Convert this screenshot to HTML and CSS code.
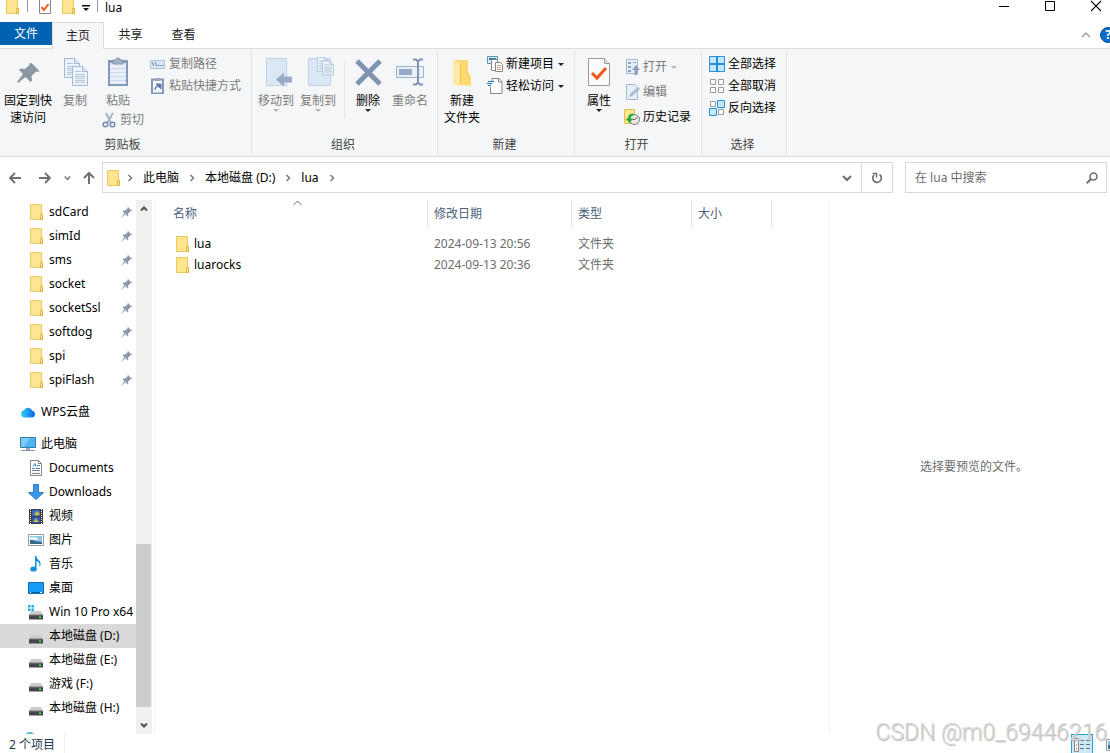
FILE: index.html
```
<!DOCTYPE html>
<html lang="zh-CN">
<head>
  <meta charset="UTF-8" />
  <meta name="viewport" content="width=device-width, initial-scale=1.0"/>
  <title>lua</title>
  <link rel="stylesheet" href="styles.css">
</head>
<body>
  <!-- Shared icons -->
  <svg class="sprite" width="0" height="0" aria-hidden="true">
    <symbol id="folder" viewBox="0 0 14 16">
      <path d="M1.500.5h11v10h1v5h-12z" fill="#ffe592" stroke="#edc85a"/>
      <path d="M11.500 10.500v5h2v-5z" fill="#ffe592" stroke="#e3b63e"/>
    </symbol>
    <symbol id="pin" viewBox="0 0 12 12">
      <path d="M7 1l4 4-1 .6-.8-.2-2 2 .1 2.100-.8.8-2-2L.8 11.300.5 11l3-3.800-2-2 .8-.8 2.200.2 2-2-.1-.900z" fill="#8b9aa7"/>
    </symbol>
    <symbol id="chev-right" viewBox="0 0 6 8">
      <path d="M1.500 1l3 3-3 3" fill="none" stroke="#7a7a7a" stroke-width="1.500"/>
    </symbol>
    <symbol id="chev-down" viewBox="0 0 10 8">
      <path d="M1 2l4 4 4-4" fill="none" stroke="currentColor" stroke-width="2"/>
    </symbol>
    <symbol id="check-doc" viewBox="0 0 22 28">
      <path d="M.5.5h16l5 5v22H.5z" fill="#fbfbfb" stroke="#999"/>
      <path d="M16.500.5v5h5" fill="#e8e8e8" stroke="#999"/>
      <path d="M4 15l5 5 9-10" fill="none" stroke="#f05a1a" stroke-width="3"/>
    </symbol>
    <symbol id="page" viewBox="0 0 16 20">
      <path d="M.5.5h10l5 5v14H.5z" fill="#edf3fb" stroke="#a5b7d2"/>
      <path d="M10.500.5v5h5" fill="#dbe6f5" stroke="#a5b7d2"/>
      <path d="M3 5.500h6M3 8.500h10M3 10.500h10M3 12.500h10M3 14.500h10M3 16.500h10" stroke="#b4c4db"/>
    </symbol>
    <symbol id="drive" viewBox="0 0 14 9">
      <path d="M2 0h10l2 4H0z" fill="#c9cbcd"/>
      <path d="M0 4h14v4.500H0z" fill="#44484b"/>
      <path d="M0 4h14" stroke="#777" />
      <path d="M10 5.500h2v1.500h-2z" fill="#4cf04c"/>
    </symbol>
  </svg>

  <div class="window">
    <!-- Title bar -->
    <header class="titlebar">
      <svg class="title-folder" width="14" height="14" viewBox="0 2 14 14"><use href="#folder" width="14" height="16"/></svg>
      <span class="title-sep"></span>
      <button class="plain" aria-label="属性">
        <svg width="12" height="14" viewBox="0 2 12 14"><path d="M.5.5h11v15H.5z" fill="#fff" stroke="#888"/><path d="M2.500 9l2.500 3 4.500-6" fill="none" stroke="#f05a1a" stroke-width="2"/></svg>
      </button>
      <button class="plain" aria-label="新建文件夹">
        <svg width="14" height="14" viewBox="0 2 14 14"><use href="#folder" width="14" height="16"/></svg>
      </button>
      <button class="plain title-more" aria-label="自定义快速访问工具栏">
        <svg width="8" height="12" viewBox="0 0 8 12"><path d="M0 5h8v1.500H0zM1 8h6L4 11z" fill="#111"/></svg>
      </button>
      <span class="title-sep"></span>
      <span class="title-text">lua</span>
      <div class="window-controls">
        <button class="plain" aria-label="最小化"><svg width="10" height="12" viewBox="0 0 10 12"><path d="M0 6.500h10" stroke="#000"/></svg></button>
        <button class="plain" aria-label="最大化"><svg width="10" height="12" viewBox="0 0 10 12"><path d="M.5 1.500h9v9h-9z" fill="none" stroke="#000"/></svg></button>
        <button class="plain" aria-label="关闭"><svg width="10" height="12" viewBox="0 0 10 12"><path d="M0 1l10 10M10 1L0 11" stroke="#000" stroke-width="1.200"/></svg></button>
      </div>
    </header>

    <!-- Ribbon tabs -->
    <nav class="tabs">
      <button class="tab tab-file">文件</button>
      <button class="tab tab-active">主页</button>
      <button class="tab">共享</button>
      <button class="tab">查看</button>
      <div class="tab-tools">
        <button class="plain" aria-label="最小化功能区"><svg width="10" height="8" viewBox="0 0 10 8"><path d="M1 6l4-4 4 4" fill="none" stroke="#a3a3a3" stroke-width="1.500"/></svg></button>
        <button class="plain help" aria-label="帮助">?</button>
      </div>
    </nav>

    <!-- Ribbon -->
    <div class="ribbon">
      <section class="group group-clipboard">
        <div class="group-body">
          <button class="big big-pin">
            <svg width="32" height="32" viewBox="0 0 32 32"><path d="M20.500 6l8 8-2 1-1.500-.5-4.500 4.500.5 4.500-1.500 1.500-5-5L7 26l-1-1 6-8-4-4 1.500-1.500 4.500.5L18.500 8l-.5-1.500z" transform="translate(-1 0)" fill="#8b98a3"/></svg>
            <span>固定到快<br>速访问</span>
          </button>
          <button class="big big-copy muted">
            <svg width="32" height="32" viewBox="0 0 32 32"><use href="#page" x="5" y="1" width="16" height="20"/><use href="#page" x="13" y="9" width="16" height="20"/></svg>
            <span>复制</span>
          </button>
          <div class="paste-column">
            <button class="big muted">
              <svg width="32" height="32" viewBox="0 0 32 32"><path d="M6 3h20v26H6z" fill="#8498ba"/><path d="M8 6h16v21H8z" fill="#e8effa"/><path d="M8 11.500h16M8 15.500h16M8 19.500h16M8 23.500h16" stroke="#cbd8ea"/><path d="M11 3h3a2 2 0 0 1 4 0h3v4H11z" fill="#a6b4c9" stroke="#8292ab"/></svg>
              <span>粘贴</span>
            </button>
            <button class="small muted">
              <svg width="16" height="16" viewBox="0 0 16 16"><path d="M5 1l5 10M12 1L6 11" stroke="#a6b4c8" stroke-width="2"/><circle cx="4.500" cy="12.500" r="2.300" fill="none" stroke="#7288b3" stroke-width="1.500"/><circle cx="11.500" cy="12.500" r="2.300" fill="none" stroke="#7288b3" stroke-width="1.500"/></svg>
              剪切
            </button>
          </div>
          <div class="stack">
            <button class="small muted">
              <svg width="16" height="16" viewBox="0 0 16 16"><path d="M.5 4.500h14v8H.5z" fill="#dde7f4" stroke="#b0c0d8"/><path d="M2 6l2 4M5 6l2 4M8 9.500h1.500M10.500 9.500h1.500M12.500 9.500h1" stroke="#687d9e"/></svg>
              复制路径
            </button>
            <button class="small muted">
              <svg width="16" height="16" viewBox="0 0 16 16"><path d="M2 1.500h11v14H2z" fill="#f3f7fc" stroke="#8498ba" stroke-width="2"/><path d="M5 0h5v3H5z" fill="#9cabc3"/><path d="M5 12c0-3 1-4 3-4M6 6h5v5z" fill="#5a77ab" stroke="#5a77ab"/></svg>
              粘贴快捷方式
            </button>
          </div>
        </div>
        <div class="group-label">剪贴板</div>
      </section>

      <section class="group">
        <div class="group-body">
          <button class="big muted">
            <svg width="32" height="32" viewBox="0 0 32 32"><path d="M6.500 1.500h20v27h-20z" fill="#dce7f5" stroke="#c2d1e6"/><path d="M16 22.500l8-7v4h8v6h-8v4z" fill="#97a9c6"/></svg>
            <span>移动到</span>
            <i class="caret"></i>
          </button>
          <button class="big muted">
            <svg width="32" height="32" viewBox="0 0 32 32"><path d="M6.500 1.500h22v27h-22z" fill="#dce7f5" stroke="#c2d1e6"/><use href="#page" x="15" y="0" width="12" height="15"/><use href="#page" x="20" y="3" width="12" height="16"/></svg>
            <span>复制到</span>
            <i class="caret"></i>
          </button>
          <span class="divider"></span>
          <button class="big">
            <svg width="32" height="32" viewBox="0 0 32 32"><path d="M5 4l23 23M28 4L5 27" stroke="#7f93b3" stroke-width="5"/></svg>
            <span>删除</span>
            <i class="caret"></i>
          </button>
          <button class="big muted">
            <svg width="32" height="32" viewBox="0 0 32 32"><path d="M2.500 9.500h27v11h-27z" fill="#e9f0fa" stroke="#9fb1cc"/><path d="M5 12h13v6H5z" fill="#94a8c7"/><path d="M24 4v22M19 2.500h3l2 2 2-2h3M19 27.500h3l2-2 2 2h3" fill="none" stroke="#8095b6" stroke-width="2"/></svg>
            <span>重命名</span>
          </button>
        </div>
        <div class="group-label">组织</div>
      </section>

      <section class="group">
        <div class="group-body">
          <button class="big">
            <svg width="32" height="32" viewBox="0 0 32 32"><path d="M7 3h15v13l3 3v10l-18-2z" fill="#ffd972"/><path d="M7 3l7 3v24l-7-3z" fill="#ffe9a6"/><path d="M14.500 6v22M20 14l3 4" stroke="#f2c550"/></svg>
            <span>新建<br>文件夹</span>
          </button>
          <div class="stack">
            <button class="small">
              <svg width="16" height="16" viewBox="0 0 16 16"><path d="M.5.500h10v7H.5z" fill="#d7edf8" stroke="#5f93ad"/><path d="M2 3h7" stroke="#28779c" stroke-width="2"/><path d="M4.500 3.500h6v11h-6z" fill="#fff" stroke="#888"/><path d="M8.500 6.500h5l2 2v7h-7z" fill="#fff" stroke="#888"/><path d="M10 9.500h4M10 11.500h4M10 13.500h4" stroke="#d99a8a"/></svg>
              新建项目
              <i class="caret"></i>
            </button>
            <button class="small">
              <svg width="16" height="16" viewBox="0 0 16 16"><path d="M5 3.500V.5h7l3 3v12H3.500V9" fill="#fff" stroke="#858585"/><path d="M11.500.5v3.500h3.500" fill="none" stroke="#858585"/><path d="M1 3.500h6M0 5.500h5M1 7.500h3" stroke="#2175ad"/></svg>
              轻松访问
              <i class="caret"></i>
            </button>
          </div>
        </div>
        <div class="group-label">新建</div>
      </section>

      <section class="group">
        <div class="group-body">
          <button class="big">
            <svg width="32" height="32" viewBox="0 0 32 32"><use href="#check-doc" x="5" y="1" width="22" height="28"/></svg>
            <span>属性</span>
            <i class="caret"></i>
          </button>
          <div class="stack stack-loose">
            <button class="small muted">
              <svg width="16" height="16" viewBox="0 0 16 16"><path d="M2.500.5h11v14h-11z" fill="#e6eef8" stroke="#a5b7d2"/><path d="M4 3h3v2H4zM4 7h3v2H4zM4 11h3v2H4zM9 3h3v1H9z" fill="#8ba1c4"/><path d="M12 6l4 5h-2.500v5h-3v-5H8z" fill="#8ba1c4"/></svg>
              打开
              <i class="caret"></i>
            </button>
            <button class="small muted">
              <svg width="16" height="16" viewBox="0 0 16 16"><path d="M2.500.5h8l3 3v12h-11z" fill="#e6eef8" stroke="#a5b7d2"/><path d="M5 13l1-3 8-7 2 2-8 7z" fill="#a7b8d1"/></svg>
              编辑
            </button>
            <button class="small">
              <svg width="16" height="16" viewBox="0 0 16 16"><path d="M.5.5h10v14H.5z" fill="#ffe794" stroke="#e3bd4e"/><circle cx="10.500" cy="10.500" r="5" fill="#e6e6e6" stroke="#777"/><path d="M10.500 10.500l3-2M10.500 10.500h-2" fill="none" stroke="#555"/><path d="M9.500 4.500c-4 0-5.500 2-5.500 5H1.500l4 4.500 3.500-4.500H6.500c0-2 1-3 3-3z" fill="#2da92d"/></svg>
              历史记录
            </button>
          </div>
        </div>
        <div class="group-label">打开</div>
      </section>

      <section class="group">
        <div class="group-body">
          <div class="stack">
            <button class="small">
              <svg width="16" height="16" viewBox="0 0 16 16"><path d="M.5.5h15v15H.5z" fill="#c5e6fb" stroke="#2690e0"/><path d="M8 0v16M0 8h16" stroke="#2690e0" stroke-width="2"/></svg>
              全部选择
            </button>
            <button class="small">
              <svg width="16" height="16" viewBox="0 0 16 16"><path d="M1.500 1.500h5v5h-5zM9.500 1.500h5v5h-5zM1.500 9.500h5v5h-5zM9.500 9.500h5v5h-5z" fill="#fff" stroke="#9b9b9b"/></svg>
              全部取消
            </button>
            <button class="small">
              <svg width="16" height="16" viewBox="0 0 16 16"><path d="M1.500 1.500h5v5h-5zM9.500 9.500h5v5h-5z" fill="#fff" stroke="#9b9b9b"/><path d="M8.500.5h7v7h-7zM.5 8.500h7v7h-7z" fill="#c5e6fb" stroke="#2690e0"/></svg>
              反向选择
            </button>
          </div>
        </div>
        <div class="group-label">选择</div>
      </section>
    </div>

    <!-- Address bar -->
    <div class="location">
      <div class="history">
        <button class="plain back" aria-label="返回"><svg width="14" height="12" viewBox="0 0 14 12"><path d="M13 6H2M7 1L2 6l5 5" fill="none" stroke="#6f6f6f" stroke-width="1.800"/></svg></button>
        <button class="plain" aria-label="前进"><svg width="14" height="12" viewBox="0 0 14 12"><path d="M1 6h11M7 1l5 5-5 5" fill="none" stroke="#6f6f6f" stroke-width="1.800"/></svg></button>
        <button class="plain" aria-label="最近浏览的位置"><svg width="7" height="6"><use href="#chev-down"/></svg></button>
        <button class="plain" aria-label="上移"><svg width="12" height="14" viewBox="0 0 12 14"><path d="M6 13V2M1 7l5-5 5 5" fill="none" stroke="#6f6f6f" stroke-width="2"/></svg></button>
      </div>
      <div class="address">
        <svg class="address-icon" width="14" height="16"><use href="#folder"/></svg>
        <svg class="crumb-sep" width="6" height="8"><use href="#chev-right"/></svg>
        <a href="#">此电脑</a>
        <svg class="crumb-sep" width="6" height="8"><use href="#chev-right"/></svg>
        <a href="#">本地磁盘 (D:)</a>
        <svg class="crumb-sep" width="6" height="8"><use href="#chev-right"/></svg>
        <a href="#">lua</a>
        <svg class="crumb-sep" width="6" height="8"><use href="#chev-right"/></svg>
        <button class="plain address-drop" aria-label="以前的位置"><svg width="10" height="8"><use href="#chev-down"/></svg></button>
        <button class="plain refresh" aria-label="刷新"><svg width="12" height="12" viewBox="0 0 12 12"><path d="M8.500 2.500A4.300 4.300 0 1 1 3 3" fill="none" stroke="#6f6f6f" stroke-width="1.700"/><path d="M1.500 1.500h4v4" fill="none" stroke="#6f6f6f" stroke-width="1.500"/></svg></button>
      </div>
      <div class="search">
        <input type="text" placeholder="在 lua 中搜索" aria-label="在 lua 中搜索">
        <svg width="12" height="12" viewBox="0 0 12 12"><circle cx="7.500" cy="4.500" r="3.500" fill="none" stroke="#6f6f6f" stroke-width="1.600"/><path d="M5 7L.8 11.200" stroke="#6f6f6f" stroke-width="2"/></svg>
      </div>
    </div>

    <div class="content">
      <!-- Navigation tree -->
      <aside class="sidebar">
        <nav class="tree">
          <a class="node child" href="#"><svg width="16" height="16"><use href="#folder"/></svg>sdCard<svg class="pin" width="12" height="12"><use href="#pin"/></svg></a>
          <a class="node child" href="#"><svg width="16" height="16"><use href="#folder"/></svg>simId<svg class="pin" width="12" height="12"><use href="#pin"/></svg></a>
          <a class="node child" href="#"><svg width="16" height="16"><use href="#folder"/></svg>sms<svg class="pin" width="12" height="12"><use href="#pin"/></svg></a>
          <a class="node child" href="#"><svg width="16" height="16"><use href="#folder"/></svg>socket<svg class="pin" width="12" height="12"><use href="#pin"/></svg></a>
          <a class="node child" href="#"><svg width="16" height="16"><use href="#folder"/></svg>socketSsl<svg class="pin" width="12" height="12"><use href="#pin"/></svg></a>
          <a class="node child" href="#"><svg width="16" height="16"><use href="#folder"/></svg>softdog<svg class="pin" width="12" height="12"><use href="#pin"/></svg></a>
          <a class="node child" href="#"><svg width="16" height="16"><use href="#folder"/></svg>spi<svg class="pin" width="12" height="12"><use href="#pin"/></svg></a>
          <a class="node child" href="#"><svg width="16" height="16"><use href="#folder"/></svg>spiFlash<svg class="pin" width="12" height="12"><use href="#pin"/></svg></a>

          <a class="node root" href="#">
            <svg width="16" height="16" viewBox="0 0 16 16">
              <defs><linearGradient id="cloud"><stop offset="0" stop-color="#2fd5e8"/><stop offset="1" stop-color="#0a5ff0"/></linearGradient></defs>
              <path d="M4.500 13.500a3.700 3.700 0 0 1-.5-7.300 4.500 4.500 0 0 1 8.300.6 3.400 3.400 0 0 1-.3 6.700z" fill="url(#cloud)"/>
            </svg>
            WPS云盘
          </a>

          <a class="node root" href="#">
            <svg width="16" height="16" viewBox="0 0 16 16"><path d="M.5 1.500h15v10H.5z" fill="#4db4f2" stroke="#3b7ba3"/><path d="M1 2h9L4 11H1z" fill="#79cbf8"/><path d="M6 12h4v2H6z" fill="#9ab"/><path d="M1 14.500h14" stroke="#8296a6"/></svg>
            此电脑
          </a>
          <a class="node child" href="#">
            <svg width="16" height="16" viewBox="0 0 16 16"><path d="M2.500.5h8l3 3v12h-11z" fill="#fff" stroke="#888"/><path d="M10.500.5v3h3" fill="none" stroke="#888"/><path d="M4 8.500h3M4 10.500h8M4 13.500h8M9 5.500h3" stroke="#6b8596"/><path d="M5 6.500l2-3 1 3M8 8.500h4" fill="none" stroke="#1687cf"/></svg>
            Documents
          </a>
          <a class="node child" href="#">
            <svg width="16" height="16" viewBox="0 0 16 16"><path d="M5.500.5h5v8h5L8 15.500.5 8.500h5z" fill="#3a97e8" stroke="#2b7fcd"/></svg>
            Downloads
          </a>
          <a class="node child" href="#">
            <svg width="16" height="16" viewBox="0 0 16 16"><path d="M1 1h14v15H1z" fill="#3c3c3c"/><path d="M4 2h8v6H4z" fill="#3969c6"/><path d="M4 9h8v6H4z" fill="#2b58b8"/><path d="M6 6l3-3 3 3-3 2zM5 14l3-4 3 4z" fill="#d4b33a"/><path d="M2.500 1v15M13.500 1v15" stroke="#fff" stroke-dasharray="1 1"/></svg>
            视频
          </a>
          <a class="node child" href="#">
            <svg width="16" height="16" viewBox="0 0 16 16"><path d="M.5 2.500h15v11H.5z" fill="#fff" stroke="#999"/><path d="M2 4h12v8H2z" fill="#8cc7f0"/><path d="M2 7l5 2 7 1v2H2z" fill="#37688b"/><path d="M2 5h6l3 3H2z" fill="#e4f3fb"/></svg>
            图片
          </a>
          <a class="node child" href="#">
            <svg width="16" height="16" viewBox="0 0 16 16"><ellipse cx="5.500" cy="13" rx="3.300" ry="2.600" fill="#1690e0"/><path d="M7 0h1.500c0 4 5 4 4 9-1 2 0 1-1 2 .5-4-1-5-3-6v8H7z" fill="#1690e0"/></svg>
            音乐
          </a>
          <a class="node child" href="#">
            <svg width="16" height="16" viewBox="0 0 16 16"><path d="M.5 2.500h15v11H.5z" fill="#159df5" stroke="#0c6fb5"/><path d="M1 12.500h14" stroke="#075f9d"/><path d="M2 12.500h1M12 12.500h2" stroke="#fff"/></svg>
            桌面
          </a>
          <a class="node child" href="#">
            <svg width="16" height="16" viewBox="0 0 16 16"><path d="M0 1h2.500v2.500H0zM3.500 1H6v2.500H3.500zM0 4.500h2.500V7H0zM3.500 4.500H6V7H3.500z" fill="#13b4ec"/><use href="#drive" x="1" y="7" width="14" height="9"/></svg>
            Win 10 Pro x64
          </a>
          <a class="node child selected" href="#"><svg width="16" height="16" viewBox="0 0 16 16"><use href="#drive" x="1" y="7" width="14" height="9"/></svg>本地磁盘 (D:)</a>
          <a class="node child" href="#"><svg width="16" height="16" viewBox="0 0 16 16"><use href="#drive" x="1" y="7" width="14" height="9"/></svg>本地磁盘 (E:)</a>
          <a class="node child" href="#"><svg width="16" height="16" viewBox="0 0 16 16"><use href="#drive" x="1" y="7" width="14" height="9"/></svg>游戏 (F:)</a>
          <a class="node child" href="#"><svg width="16" height="16" viewBox="0 0 16 16"><use href="#drive" x="1" y="7" width="14" height="9"/></svg>本地磁盘 (H:)</a>
          <a class="node root" href="#" aria-label="网络">
            <svg width="16" height="16" viewBox="0 0 16 16"><circle cx="10" cy="5" r="5" fill="#5fb0cf"/></svg>
          </a>
        </nav>
        <div class="scrollbar">
          <button class="plain scroll-btn" aria-label="向上滚动"><svg width="8" height="7" viewBox="0 0 8 7"><path d="M1 5.500l3-3 3 3" fill="none" stroke="#505050" stroke-width="2"/></svg></button>
          <div class="scroll-before"></div>
          <div class="scroll-thumb"></div>
          <div class="scroll-after"></div>
          <button class="plain scroll-btn" aria-label="向下滚动"><svg width="8" height="7" viewBox="0 0 8 7"><path d="M1 1.500l3 3 3-3" fill="none" stroke="#505050" stroke-width="2"/></svg></button>
        </div>
      </aside>

      <!-- File list -->
      <main class="files">
        <table>
          <thead>
            <tr>
              <th class="col-name">名称<svg class="sort" width="9" height="6" viewBox="0 0 9 6"><path d="M.5 5l4-4 4 4" fill="none" stroke="#666"/></svg></th>
              <th class="col-date">修改日期</th>
              <th class="col-type">类型</th>
              <th class="col-size">大小</th>
            </tr>
          </thead>
          <tbody>
            <tr>
              <td><a class="file" href="#"><svg width="14" height="16"><use href="#folder"/></svg>lua</a></td>
              <td>2024-09-13 20:56</td>
              <td>文件夹</td>
              <td></td>
            </tr>
            <tr>
              <td><a class="file" href="#"><svg width="14" height="16"><use href="#folder"/></svg>luarocks</a></td>
              <td>2024-09-13 20:36</td>
              <td>文件夹</td>
              <td></td>
            </tr>
          </tbody>
        </table>
      </main>

      <aside class="preview">选择要预览的文件。</aside>
    </div>

    <!-- Status bar -->
    <footer class="status">
      <span class="count">2 个项目</span>
      <div class="views">
        <button class="plain view view-on" aria-label="详细信息"><svg width="16" height="14" viewBox="0 0 16 14"><path d="M.5.5h4v13h-4z" fill="#fff" stroke="#888"/><path d="M2 3h1M2 7h1M2 11h1" stroke="#c33"/><path d="M6 2.500h4M12 2.500h4M6 6.500h4M12 6.500h4M6 10.500h4M12 10.500h4" stroke="#5f7480"/></svg></button>
        <button class="plain view" aria-label="大缩略图"><svg width="16" height="12" viewBox="0 0 16 12"><path d="M.5.5h15v11H.5z" fill="#fff" stroke="#999"/><path d="M2 2h12v8H2z" fill="#7dbbe8"/><path d="M2 6l5 1 7 2v1H2z" fill="#37688b"/></svg></button>
      </div>
    </footer>
    <div class="watermark">CSDN @m0_69446216</div>
  </div>
</body>
</html>
```
FILE: styles.css
```
* {
  box-sizing: border-box;
}

body {
  margin: 0;
  background: #fff;
  color: #000;
  font-family: "Noto Sans", "Noto Sans CJK SC", sans-serif;
  font-size: 12px;
  line-height: 16px;
}

a {
  color: inherit;
  text-decoration: none;
}

button, input {
  font: inherit;
  color: inherit;
  border: none;
  background: none;
  padding: 0;
}

svg {
  display: block;
  flex: none;
}

.sprite {
  position: absolute;
}

.window {
  position: relative;
  display: flex;
  flex-direction: column;
  height: 100vh;
  overflow: hidden;
}

.plain {
  display: flex;
  align-items: center;
  justify-content: center;
}

/* title bar */
.titlebar {
  display: flex;
  align-items: flex-start;
  gap: 10px;
  height: 22px;
  padding-left: 5px;
}

.title-sep {
  width: 1px;
  height: 12px;
  margin-right: 1px;
  background: #999;
}

.title-folder {
  margin-right: -2px;
}

.title-more {
  margin-left: -3px;
  margin-right: -3px;
}

.title-text {
  margin-left: -4px;
  line-height: 16px;
}

.window-controls {
  display: flex;
  gap: 36px;
  margin-left: auto;
  padding-right: 9px;
}

/* tabs */
.tabs {
  display: flex;
  height: 26px;
}

.tab {
  width: 53px;
  height: 26px;
  color: #222;
}

.tab-file {
  width: 52px;
  height: 23px;
  background: #0063b1;
  color: #fff;
}

.tab-active {
  position: relative;
  width: 52px;
  height: 27px;
  padding-bottom: 1px;
  background: #f5f6f7;
  border: 1px solid #dadbdc;
  border-bottom: none;
}

.tab-tools {
  display: flex;
  align-items: center;
  gap: 9px;
  margin-left: auto;
  overflow: hidden;
}

.help {
  width: 16px;
  height: 16px;
  margin-right: -6px;
  border: 1px solid #164f86;
  border-radius: 50%;
  background: #0a6cce;
  color: #fff;
  font-weight: bold;
}

/* ribbon */
.ribbon {
  display: flex;
  height: 109px;
  padding: 2px 0;
  background: #f5f6f7;
  border-top: 1px solid #dadbdc;
  border-bottom: 1px solid #dadbdc;
}

.group {
  display: flex;
  flex-direction: column;
  padding: 0 6px 0 3px;
  border-right: 1px solid #e2e3e4;
}

.group-clipboard {
  padding-left: 0;
}

.group-body {
  display: flex;
  flex: 1;
}

.group-label {
  color: #444;
  line-height: 18px;
  text-align: center;
}

.big {
  display: flex;
  flex-direction: column;
  align-items: center;
  align-self: flex-start;
  width: 42px;
  padding-top: 6px;
  line-height: 17px;
  white-space: nowrap;
}

.big svg {
  margin-bottom: 3px;
}

.big-pin {
  width: 56px;
}

.big-copy {
  width: 38px;
}

.small {
  display: flex;
  align-items: center;
  gap: 3px;
  height: 22px;
  padding: 0 4px;
  white-space: nowrap;
}

.muted {
  color: #7b7b7b;
}

.caret {
  width: 0;
  height: 0;
  border: 3px solid transparent;
  border-top-color: #222;
  border-bottom: none;
}

.muted .caret {
  border-top-color: #b5b5b5;
}

.small .caret {
  margin-left: 1px;
}

.paste-column {
  display: flex;
  flex-direction: column;
  width: 52px;
  padding-left: 3px;
}

.stack {
  display: flex;
  flex-direction: column;
  padding-top: 2px;
}

.stack-loose {
  padding-top: 5px;
  gap: 3px;
}

.divider {
  width: 1px;
  height: 56px;
  margin: 12px 2px 0 5px;
  background: #e2e3e4;
}

/* address bar */
.location {
  display: flex;
  padding: 5px 3px 7px 0;
}

.history {
  display: flex;
  align-items: center;
  justify-content: space-between;
  width: 102px;
  padding: 0 7px 0 8px;
  color: #777;
}

.back {
  margin-right: 4px;
}

.address {
  display: flex;
  flex: 1;
  align-items: center;
  height: 31px;
  margin-right: 12px;
  padding-left: 3px;
  border: 1px solid #d9d9d9;
}

.address-icon {
  margin-right: -3px;
}

.crumb-sep {
  margin: 0 10px;
}

.address-drop {
  width: 28px;
  margin-left: auto;
  color: #6f6f6f;
}

.refresh {
  align-self: stretch;
  width: 31px;
  border-left: 1px solid #d9d9d9;
}

.search {
  display: flex;
  align-items: center;
  width: 202px;
  padding: 0 8px 0 9px;
  border: 1px solid #d9d9d9;
}

.search input {
  flex: 1;
  min-width: 0;
  outline: none;
}

.search input::placeholder {
  color: #6d6d6d;
  opacity: 1;
}

/* content */
.content {
  display: flex;
  flex: 1;
  min-height: 0;
}

.sidebar {
  display: flex;
  width: 155px;
  border-right: 1px solid #f3f3f3;
}

.tree {
  flex: 1;
  min-width: 0;
  overflow: hidden;
}

.node {
  display: flex;
  align-items: center;
  gap: 5px;
  height: 24px;
  white-space: nowrap;
}

.child {
  padding-left: 28px;
}

.root {
  margin-top: 8px;
  padding-left: 20px;
}

.selected {
  background: #d9d9d9;
}

.pin {
  margin-left: auto;
  margin-right: 3px;
}

.scrollbar {
  display: flex;
  flex-direction: column;
  width: 16px;
  margin-right: 2px;
  background: #f0f0f0;
}

.scroll-btn {
  height: 17px;
}

.scroll-before {
  flex: 327;
}

.scroll-thumb {
  flex: 163;
  margin-right: 1px;
  background: #cdcdcd;
}

.scroll-after {
  flex: 10;
}

.files {
  flex: 1;
  min-width: 0;
  padding-left: 12px;
}

table {
  table-layout: fixed;
  width: 605px;
  border-collapse: separate;
  border-spacing: 0;
}

th {
  position: relative;
  height: 28px;
  padding: 0 6px;
  border-right: 1px solid #e5e5e5;
  color: #4c607a;
  font-weight: normal;
  text-align: left;
}

.col-name {
  width: 261px;
}

.col-date {
  width: 144px;
}

.col-type {
  width: 120px;
}

.col-size {
  width: 80px;
}

.sort {
  position: absolute;
  top: 0;
  left: 126px;
}

tbody::before {
  content: "";
  display: block;
  height: 5px;
}

td {
  height: 21px;
  padding: 0 6px;
  color: #6d6d6d;
}

.file {
  display: flex;
  align-items: center;
  gap: 5px;
  padding-left: 2px;
  color: #000;
}

.preview {
  display: flex;
  align-items: center;
  justify-content: center;
  width: 281px;
  padding-left: 8px;
  border-left: 1px solid #f3f3f3;
  color: #6d6d6d;
}

/* status bar */
.status {
  display: flex;
  justify-content: space-between;
  height: 19px;
  overflow: hidden;
}

.count {
  padding: 3px 9px 0;
  border-right: 1px solid #f0f0f0;
  color: #24344d;
}

.views {
  display: flex;
  gap: 10px;
  margin-right: -15px;
}

.view {
  width: 22px;
  height: 21px;
}

.view-on {
  border: 1px solid #26a0da;
  background: #cbe8f6;
}

.watermark {
  position: absolute;
  right: 3px;
  bottom: 6px;
  color: #d6d6d6;
  font-family: Roboto, "Liberation Sans", sans-serif;
  font-size: 23px;
  font-weight: 300;
  line-height: 28px;
  text-shadow: 1px 1px 1px #b4b4b4;
  pointer-events: none;
}
```
